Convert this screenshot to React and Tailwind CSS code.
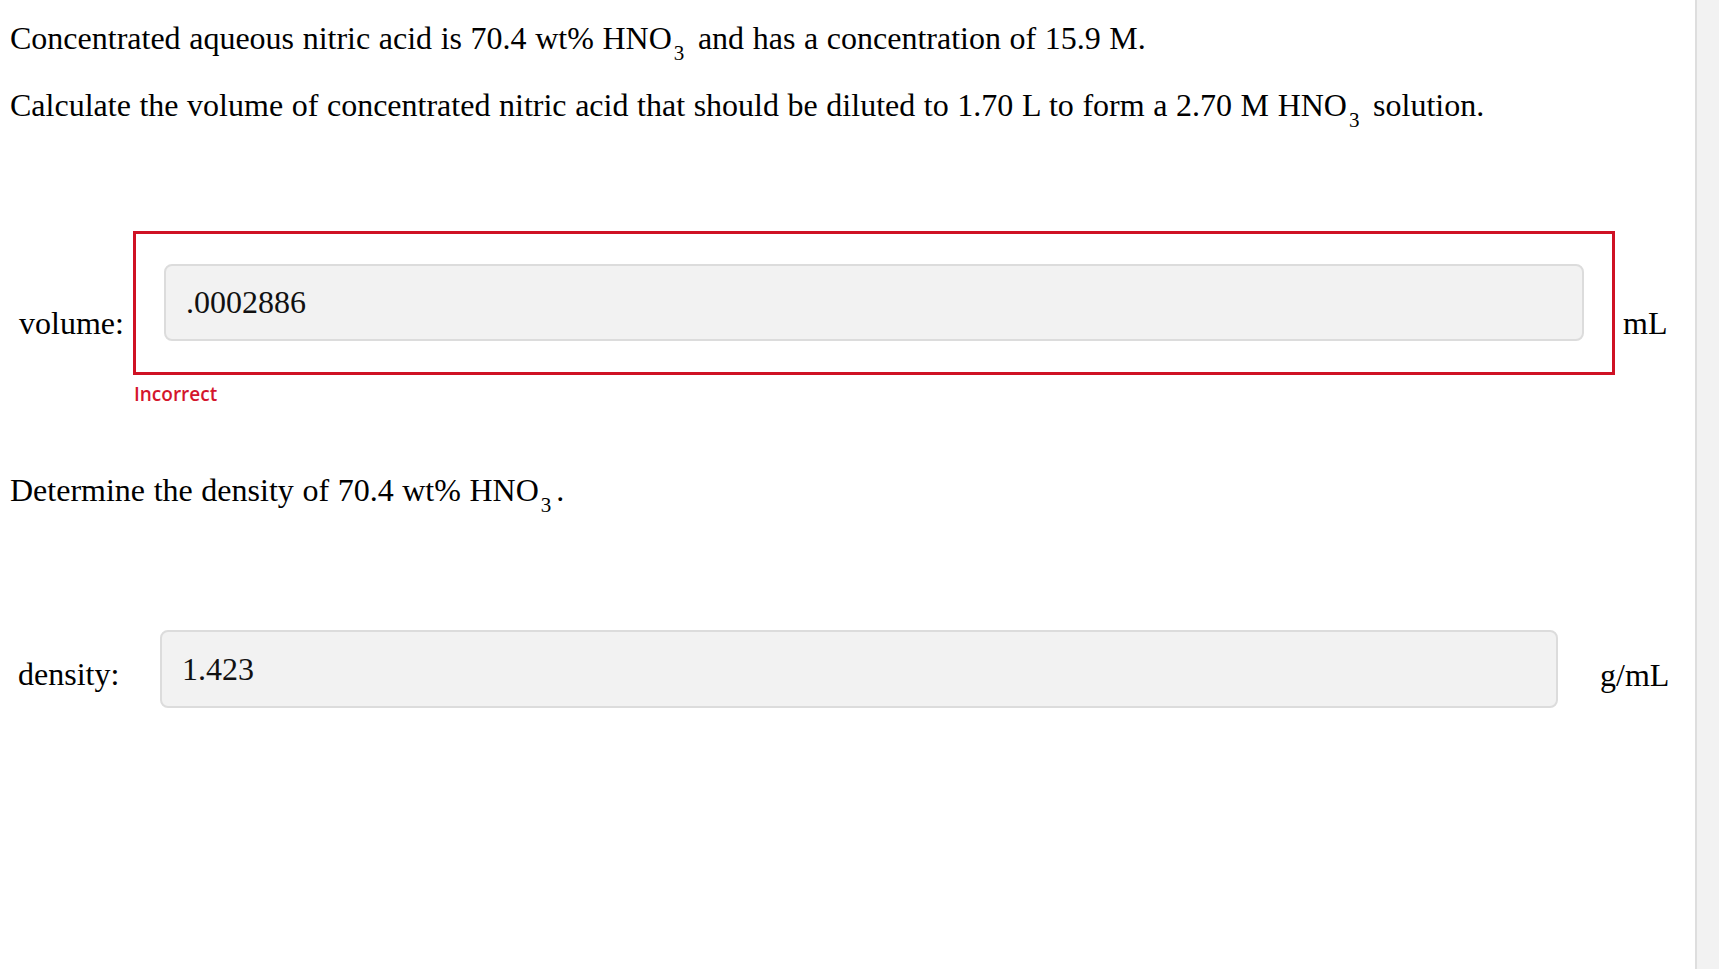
export default function App() {
    const serif = { fontFamily: '"Liberation Serif", "Times New Roman", serif' };

    return (
        <div className="flex h-screen w-full overflow-hidden bg-white">
            <div className="flex-1 pl-[10px] pt-[18px] text-[32px] leading-[40px] text-black [word-spacing:0.6px]" style={serif}>
                <p className="mb-[27px]">
                    Concentrated aqueous nitric acid is 70.4 wt% HNO<Sub>3</Sub> and has a concentration of 15.9 M.
                </p>
                <p>
                    Calculate the volume of concentrated nitric acid that should be diluted to 1.70 L to form a 2.70 M HNO<Sub>3</Sub> solution.
                </p>

                {/* volume answer, marked wrong */}
                <div className="mt-[106px] flex items-start">
                    <label className="mt-[72px] w-[123px] pl-[9px]">volume:</label>
                    <div className="flex flex-col">
                        <div className="w-[1482px] border-[3px] border-[#cf1124] px-[28px] pb-[31px] pt-[30px]">
                            <input
                                readOnly
                                defaultValue=".0002886"
                                className="h-[77px] w-full rounded-[8px] border-2 border-[#dcdcdc] bg-[#f2f2f2] pl-[20px] text-[32px] text-[#111] outline-none"
                                style={serif}
                            />
                        </div>
                        <span
                            className="mt-[7px] pl-[1px] text-[19px] font-semibold leading-[24px] text-[#d4162c]"
                            style={{ fontFamily: '"Open Sans", "Noto Sans", sans-serif' }}
                        >
                            Incorrect
                        </span>
                    </div>
                    <span className="ml-[8px] mt-[72px]">mL</span>
                </div>

                <p className="mt-[64px]">
                    Determine the density of 70.4 wt% HNO<Sub>3</Sub>.
                </p>

                <div className="mt-[120px] flex items-start">
                    <label className="mt-[24px] w-[150px] pl-[8px]">density:</label>
                    <input
                        readOnly
                        defaultValue="1.423"
                        className="h-[78px] w-[1398px] rounded-[8px] border-2 border-[#dcdcdc] bg-[#f2f2f2] pl-[20px] text-[32px] text-[#111] outline-none"
                        style={serif}
                    />
                    <span className="ml-[42px] mt-[25px]">g/mL</span>
                </div>
            </div>
            <div className="w-[24px] shrink-0 border-l-2 border-[#dedede] bg-[#f2f2f2]"></div>
        </div>
    );
}

function Sub({ children }) {
    return <span className="relative top-[11px] ml-[2px] mr-[5px] text-[21px] leading-none">{children}</span>;
}
